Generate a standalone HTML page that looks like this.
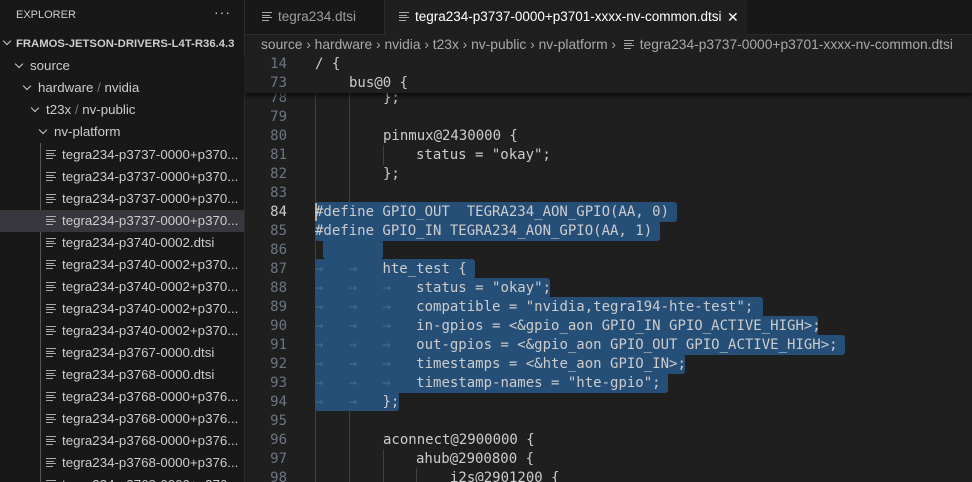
<!DOCTYPE html>
<html><head><meta charset="utf-8"><style>
*{margin:0;padding:0;box-sizing:border-box}
html,body{width:972px;height:482px;overflow:hidden}
body{background:#1f1f1f;font-family:"Liberation Sans",sans-serif;position:relative;color:#cccccc}
#side{position:absolute;left:0;top:0;width:245px;height:482px;background:#181818;border-right:1px solid #2b2b2b;overflow:hidden}
.row{position:absolute;left:0;width:244px;height:22px;line-height:22px;font-size:13.3px;color:#cccccc;white-space:nowrap;overflow:hidden}
.chev{display:inline-block;border-right:1.3px solid #ccc;border-bottom:1.3px solid #ccc;transform:rotate(45deg);position:relative;width:6px;height:6px;margin-right:8px;top:-3px}
.fi{display:inline-block;width:11px;height:9px;margin-right:5px;position:relative;top:0px;background:linear-gradient(#aaa,#aaa) 0 0/10px 1.3px no-repeat,linear-gradient(#aaa,#aaa) 0 2.6px/8px 1.3px no-repeat,linear-gradient(#aaa,#aaa) 0 5.2px/10px 1.3px no-repeat,linear-gradient(#aaa,#aaa) 0 7.8px/7px 1.3px no-repeat}
#tabs{position:absolute;left:245px;top:0;width:727px;height:35px;background:#181818;border-bottom:1px solid #2b2b2b}
.tab{position:absolute;top:0;height:35px;line-height:34px;font-size:13.5px;white-space:nowrap}
#crumb{position:absolute;left:245px;top:35px;width:727px;height:20px;line-height:20px;font-size:13.8px;color:#a9a9a9;padding-left:16px;white-space:nowrap;overflow:hidden}
.code{position:absolute;font-family:"DejaVu Sans Mono","Liberation Mono",monospace;font-size:14px;line-height:19px;white-space:pre;color:#cccccc}
.ln{position:absolute;left:245px;width:42px;text-align:right;font-family:"DejaVu Sans Mono","Liberation Mono",monospace;font-size:14px;line-height:19px;color:#6e7681}
.sel{position:absolute;background:#264f78;border-radius:3px}
.g{position:absolute;width:1px;background:#404040}
.ar{color:#4a6a88}
</style></head><body>
<div id="side">
<div class="row" style="top:4px;font-size:11px;padding-left:16px;color:#cccccc;overflow:visible">EXPLORER<span style="position:absolute;left:214px;top:-3px;font-size:14px;letter-spacing:1px">···</span></div>
<div class="row" style="top:33px;padding-left:4px;font-size:11.3px;font-weight:bold"><span class="chev" style="margin-right:6px"></span>FRAMOS-JETSON-DRIVERS-L4T-R36.4.3</div>
<div class="row" style="top:55px;padding-left:16px"><span class="chev"></span>source</div>
<div class="row" style="top:77px;padding-left:24px"><span class="chev"></span>hardware <span style="color:#777">/</span> nvidia</div>
<div class="row" style="top:99px;padding-left:32px"><span class="chev"></span>t23x <span style="color:#777">/</span> nv-public</div>
<div class="row" style="top:121px;padding-left:40px"><span class="chev"></span>nv-platform</div>
<div style="position:absolute;left:40px;top:143px;width:1px;height:339px;background:#585858"></div>
<div class="row" style="top:144px;padding-left:46px"><span class="fi"></span>tegra234-p3737-0000+p370...</div>
<div class="row" style="top:166px;padding-left:46px"><span class="fi"></span>tegra234-p3737-0000+p370...</div>
<div class="row" style="top:188px;padding-left:46px"><span class="fi"></span>tegra234-p3737-0000+p370...</div>
<div class="row" style="top:210px;padding-left:46px;background:#37373d"><span class="fi"></span>tegra234-p3737-0000+p370...</div>
<div class="row" style="top:232px;padding-left:46px"><span class="fi"></span>tegra234-p3740-0002.dtsi</div>
<div class="row" style="top:254px;padding-left:46px"><span class="fi"></span>tegra234-p3740-0002+p370...</div>
<div class="row" style="top:276px;padding-left:46px"><span class="fi"></span>tegra234-p3740-0002+p370...</div>
<div class="row" style="top:298px;padding-left:46px"><span class="fi"></span>tegra234-p3740-0002+p370...</div>
<div class="row" style="top:320px;padding-left:46px"><span class="fi"></span>tegra234-p3740-0002+p370...</div>
<div class="row" style="top:342px;padding-left:46px"><span class="fi"></span>tegra234-p3767-0000.dtsi</div>
<div class="row" style="top:364px;padding-left:46px"><span class="fi"></span>tegra234-p3768-0000.dtsi</div>
<div class="row" style="top:386px;padding-left:46px"><span class="fi"></span>tegra234-p3768-0000+p376...</div>
<div class="row" style="top:408px;padding-left:46px"><span class="fi"></span>tegra234-p3768-0000+p376...</div>
<div class="row" style="top:430px;padding-left:46px"><span class="fi"></span>tegra234-p3768-0000+p376...</div>
<div class="row" style="top:452px;padding-left:46px"><span class="fi"></span>tegra234-p3768-0000+p376...</div>
<div class="row" style="top:474px;padding-left:46px"><span class="fi"></span>tegra234-p3768-0000+p376...</div>
</div>
<div id="tabs">
<div class="tab" style="left:0;width:140px;padding-left:17px;color:#9d9d9d;border-right:1px solid #2b2b2b"><span class="fi"></span>tegra234.dtsi</div>
<div class="tab" style="left:140px;width:362px;height:36px;background:#1f1f1f;padding-left:14px;color:#ffffff"><span class="fi"></span>tegra234-p3737-0000+p3701-xxxx-nv-common.dtsi<span style="position:absolute;left:342px;top:0;font-size:14px">✕</span></div>
</div>
<div id="crumb">source › hardware › nvidia › t23x › nv-public › nv-platform › &nbsp;<span class="fi"></span>tegra234-p3737-0000+p3701-xxxx-nv-common.dtsi</div>

<div class="g" style="left:315px;top:93px;height:389px"></div>
<div class="g" style="left:349px;top:93px;height:389px"></div>
<div class="g" style="left:383px;top:145px;height:20px"></div>
<div class="g" style="left:416px;top:278px;height:114px"></div>
<div class="g" style="left:383px;top:449px;height:33px"></div>
<div class="g" style="left:416px;top:468px;height:14px"></div>

<div class="sel" style="left:315px;top:202px;width:362px;height:20px"></div>
<div class="sel" style="left:315px;top:221px;width:345px;height:20px"></div>
<div class="sel" style="left:323px;top:240px;width:60px;height:19px"></div>
<div class="sel" style="left:315px;top:259px;width:160px;height:20px"></div>
<div class="sel" style="left:315px;top:278px;width:235px;height:20px"></div>
<div class="sel" style="left:315px;top:297px;width:448px;height:20px"></div>
<div class="sel" style="left:315px;top:316px;width:503px;height:20px"></div>
<div class="sel" style="left:315px;top:335px;width:530px;height:20px"></div>
<div class="sel" style="left:315px;top:354px;width:370px;height:20px"></div>
<div class="sel" style="left:315px;top:373px;width:353px;height:20px"></div>
<div class="sel" style="left:315px;top:392px;width:84px;height:19px"></div>
<div style="position:absolute;left:315px;top:203px;width:2px;height:18px;background:#aeafad"></div>

<div class="ln" style="top:88.5px">78</div><div class="code" style="left:383px;top:88.5px">};</div>
<div class="ln" style="top:107.5px">79</div>
<div class="ln" style="top:126.5px">80</div><div class="code" style="left:383px;top:126.5px">pinmux@2430000 {</div>
<div class="ln" style="top:145.5px">81</div><div class="code" style="left:416px;top:145.5px">status = "okay";</div>
<div class="ln" style="top:164.5px">82</div><div class="code" style="left:383px;top:164.5px">};</div>
<div class="ln" style="top:183.5px">83</div>
<div class="ln" style="top:202.5px;color:#cccccc">84</div><div class="code" style="left:315px;top:202.5px">#define GPIO_OUT  TEGRA234_AON_GPIO(AA, 0)</div>
<div class="ln" style="top:221.5px">85</div><div class="code" style="left:315px;top:221.5px">#define GPIO_IN TEGRA234_AON_GPIO(AA, 1)</div>
<div class="ln" style="top:240.5px">86</div>
<div class="ln" style="top:259.5px">87</div><div class="code" style="left:315px;top:259.5px"><span class="ar">→   →   </span>hte_test {</div>
<div class="ln" style="top:278.5px">88</div><div class="code" style="left:315px;top:278.5px"><span class="ar">→   →   →   </span>status = "okay";</div>
<div class="ln" style="top:297.5px">89</div><div class="code" style="left:315px;top:297.5px"><span class="ar">→   →   →   </span>compatible = "nvidia,tegra194-hte-test";</div>
<div class="ln" style="top:316.5px">90</div><div class="code" style="left:315px;top:316.5px"><span class="ar">→   →   →   </span>in-gpios = &lt;&amp;gpio_aon GPIO_IN GPIO_ACTIVE_HIGH&gt;;</div>
<div class="ln" style="top:335.5px">91</div><div class="code" style="left:315px;top:335.5px"><span class="ar">→   →   →   </span>out-gpios = &lt;&amp;gpio_aon GPIO_OUT GPIO_ACTIVE_HIGH&gt;;</div>
<div class="ln" style="top:354.5px">92</div><div class="code" style="left:315px;top:354.5px"><span class="ar">→   →   →   </span>timestamps = &lt;&amp;hte_aon GPIO_IN&gt;;</div>
<div class="ln" style="top:373.5px">93</div><div class="code" style="left:315px;top:373.5px"><span class="ar">→   →   →   </span>timestamp-names = "hte-gpio";</div>
<div class="ln" style="top:392.5px">94</div><div class="code" style="left:315px;top:392.5px"><span class="ar">→   →   </span>};</div>
<div class="ln" style="top:411.5px">95</div>
<div class="ln" style="top:430.5px">96</div><div class="code" style="left:383px;top:430.5px">aconnect@2900000 {</div>
<div class="ln" style="top:449.5px">97</div><div class="code" style="left:416px;top:449.5px">ahub@2900800 {</div>
<div class="ln" style="top:468.5px">98</div><div class="code" style="left:450px;top:468.5px">i2s@2901200 {</div>

<div style="position:absolute;left:245px;top:55px;width:727px;height:38px;background:#1f1f1f;box-shadow:0 3px 4px rgba(0,0,0,0.6)">
<div class="ln" style="left:0;top:0">14</div><div class="code" style="left:70px;top:0">/ {</div>
<div class="ln" style="left:0;top:19px">73</div><div class="code" style="left:104px;top:19px">bus@0 {</div>
</div>
</body></html>
